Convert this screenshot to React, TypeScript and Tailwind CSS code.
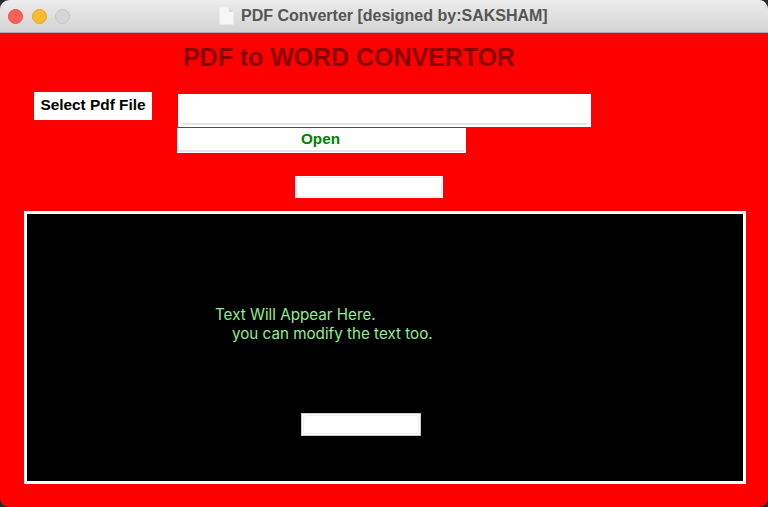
const sans = "font-['Liberation_Sans',Arial,sans-serif]";

function TrafficLights() {
  return (
    <div className="flex items-center gap-[8.5px] pt-[1px] pl-2">
      <span className="h-[15px] w-[15px] rounded-full border border-[#e5524e] bg-[#ff5f57]" />
      <span className="h-[15px] w-[15px] rounded-full border border-[#e0a520] bg-[#febc2e]" />
      <span className="h-[15px] w-[15px] rounded-full border border-[#c4c4c4] bg-[#d6d6d6]" />
    </div>
  );
}

// tk style button: white box, with the native bezel faintly showing inside
function TkButton({ className }: { className: string }) {
  return (
    <div className={`bg-white p-[1px] ${className}`}>
      <div className="h-full w-full rounded-[3px] border border-[#ececec]" />
    </div>
  );
}

export default function App() {
  return (
    <div className={`flex h-[507px] w-[768px] flex-col overflow-hidden bg-[#2b2b2b] ${sans}`}>
      <div className="flex h-[33px] shrink-0 items-center rounded-t-[9px] border-b border-[#a9a9a9] bg-gradient-to-b from-[#ececec] to-[#d4d4d4]">
        <TrafficLights />
        <div className="ml-[149px] flex items-center gap-[7px]">
          <svg width="15" height="18" viewBox="0 0 15 18">
            <path d="M0.5 0.5H10L14.5 5V17.5H0.5Z" fill="#f6f6f6" />
            <path d="M10 0.5V5H14.5Z" fill="#d9d9d9" />
          </svg>
          <span className="text-[16px] font-bold whitespace-nowrap text-[#555555]">PDF Converter [designed by:SAKSHAM]</span>
        </div>
      </div>

      <div className="flex flex-1 flex-col rounded-b-[9px] bg-[#ff0000]">
        <h1 className="mt-[8px] ml-[183px] text-[25px] leading-[33px] font-bold tracking-[-0.05px] whitespace-nowrap text-[#8b0000]">
          PDF to WORD CONVERTOR
        </h1>

        <div className="mt-[18px] flex items-start">
          <div className="ml-[34px] flex h-[28px] w-[118px] items-center justify-center bg-white pb-[2px] text-[15.4px] font-bold whitespace-nowrap text-black">
            Select Pdf File
          </div>
          <div className="mt-[2px] ml-[26px] h-[33px] w-[413px] bg-white pr-[3px] pb-[2px] pl-[3px]">
            <div className="h-full w-full rounded-b-[2px] border-b-2 border-[#e4e4e4]" />
          </div>
        </div>

        <div className="mt-[1px] ml-[177px] h-[25px] w-[289px] bg-white px-[1px] pb-[1px]">
          <div className="flex h-full w-full items-center justify-center rounded-[3px] border-b-2 border-[#e4e4e4] pt-[1px] pr-[2px] text-[15.3px] font-bold text-[#008000]">
            Open
          </div>
        </div>

        <TkButton className="mt-[23px] ml-[295px] h-[22px] w-[148px]" />

        <div className="mt-[13px] ml-[24px] flex h-[273px] w-[722px] flex-col border-[3px] border-white bg-black font-['Inter',sans-serif] text-[15.2px] leading-[19px] text-[#90ee90]">
          <div className="mt-[91px] ml-[188px] flex flex-col">
            <span>Text Will Appear Here.</span>
            <span className="ml-[17px]">you can modify the text too.</span>
          </div>
          <div className="mt-[70px] ml-[274px] h-[23px] w-[120px] border border-[#c9c9c9] bg-white p-[1px]">
            <div className="h-full w-full rounded-[3px] border border-[#ececec]" />
          </div>
        </div>
      </div>
    </div>
  );
}
